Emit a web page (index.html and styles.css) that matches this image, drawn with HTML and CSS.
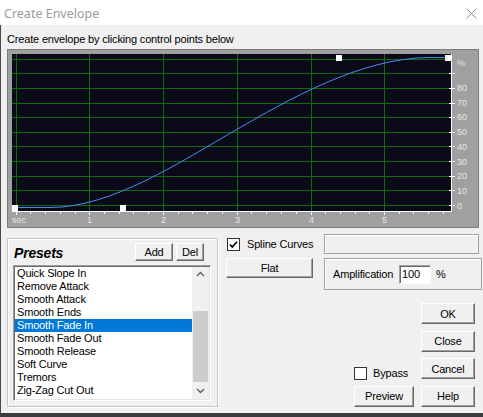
FILE: index.html
```html
<!DOCTYPE html>
<html>
<head>
<meta charset="utf-8">
<title>Create Envelope</title>
<link rel="stylesheet" href="styles.css">
</head>
<body>
<div class="window">
  <div class="titlebar">
    <span class="title">Create Envelope</span>
    <svg class="close" width="11" height="11" viewBox="0 0 11 11"><path d="M0.5 0.5 L10.5 10.5 M10.5 0.5 L0.5 10.5" stroke="#8c8c8c" stroke-width="1" fill="none"/></svg>
  </div>
  <div class="content">
    <div class="hint">Create envelope by clicking control points below</div>
    <div class="graph">
      <svg width="472" height="179" viewBox="7 49 472 179">
        <rect x="7.5" y="49.5" width="471" height="178" fill="#a0a0a0" stroke="#7c7c7c"/>
        <rect x="12" y="54" width="439" height="157" fill="#0a0a19"/>
        <g stroke="#0b6e0b" stroke-width="1" shape-rendering="crispEdges">
          <path d="M12 59.5H451M12 73.5H451M12 88.5H451M12 103.5H451M12 117.5H451M12 132.5H451M12 146.5H451M12 161.5H451M12 176.5H451M12 190.5H451M12 205.5H451"/>
          <path d="M16.5 54V211M89.5 54V211M163.5 54V211M237.5 54V211M311.5 54V211M384.5 54V211"/>
        </g>
        <g stroke="#ffffff" stroke-width="1" shape-rendering="crispEdges" fill="none">
          <path d="M12 211.5H452M451.5 54V212"/>
          <path d="M449 73.5H455M449 88.5H455M449 103.5H455M449 117.5H455M449 132.5H455M449 146.5H455M449 161.5H455M449 176.5H455M449 190.5H455M449 205.5H455"/>
          <path d="M16.5 212V215M30.5 212V214M45.5 212V214M60.5 212V214M75.5 212V214M89.5 212V215M104.5 212V214M119.5 212V214M133.5 212V214M148.5 212V214M163.5 212V215M178.5 212V214M192.5 212V214M207.5 212V214M222.5 212V214M237.5 212V215M251.5 212V214M266.5 212V214M281.5 212V214M296.5 212V214M311.5 212V215M325.5 212V214M340.5 212V214M355.5 212V214M369.5 212V214M384.5 212V215M399.5 212V214M413.5 212V214M428.5 212V214M443.5 212V214"/>
        </g>
        <g class="axis">
          <text x="457" y="66">%</text>
          <text x="457" y="91">80</text>
          <text x="457" y="105.5">70</text>
          <text x="457" y="120">60</text>
          <text x="457" y="135">50</text>
          <text x="457" y="149.5">40</text>
          <text x="457" y="164.5">30</text>
          <text x="457" y="179">20</text>
          <text x="457" y="194">10</text>
          <text x="457" y="208.5">0</text>
          <text x="12" y="222.5">sec</text>
          <text x="89.5" y="222.5" text-anchor="middle">1</text>
          <text x="163.5" y="222.5" text-anchor="middle">2</text>
          <text x="237.5" y="222.5" text-anchor="middle">3</text>
          <text x="311.5" y="222.5" text-anchor="middle">4</text>
          <text x="384.5" y="222.5" text-anchor="middle">5</text>
        </g>
        <path d="M12 207.5H50C112 207.5 180 162 237 129.3C285 101.8 360 57.5 430 57.5H451" stroke="#4d88f5" stroke-width="1" fill="none"/>
        <g fill="#ffffff" shape-rendering="crispEdges">
          <rect x="12" y="205" width="6" height="6"/>
          <rect x="120" y="205" width="6" height="6"/>
          <rect x="336" y="55" width="6" height="6"/>
          <rect x="445" y="55" width="6" height="6"/>
        </g>
      </svg>
    </div>
    <div class="lower">
      <div class="presets">
        <div class="presets-head">
          <span class="presets-title">Presets</span>
          <div class="head-buttons">
            <button class="btn btn-add">Add</button>
            <button class="btn btn-del">Del</button>
          </div>
        </div>
        <div class="listbox">
          <ul class="items">
            <li>Quick Slope In</li>
            <li>Remove Attack</li>
            <li>Smooth Attack</li>
            <li>Smooth Ends</li>
            <li class="selected">Smooth Fade In</li>
            <li>Smooth Fade Out</li>
            <li>Smooth Release</li>
            <li>Soft Curve</li>
            <li>Tremors</li>
            <li>Zig-Zag Cut Out</li>
          </ul>
          <div class="scrollbar">
            <div class="sb-btn sb-up"><svg width="9" height="6" viewBox="0 0 9 6"><path d="M1 5 L4.5 1.5 L8 5" stroke="#606060" stroke-width="1.4" fill="none"/></svg></div>
            <div class="sb-track-top"></div>
            <div class="sb-thumb"></div>
            <div class="sb-btn sb-down"><svg width="9" height="6" viewBox="0 0 9 6"><path d="M1 1 L4.5 4.5 L8 1" stroke="#606060" stroke-width="1.4" fill="none"/></svg></div>
          </div>
        </div>
      </div>
      <div class="controls">
        <div class="top-grid">
          <label class="check spline"><span class="cbox"><svg width="11" height="11" viewBox="0 0 11 11"><path d="M2 5.5 L4.3 8 L9 2.8" stroke="#000" stroke-width="1.7" fill="none"/></svg></span>Spline Curves</label>
          <div class="blank-box"></div>
          <button class="btn btn-flat">Flat</button>
          <div class="amp-box"><span class="amp-label">Amplification</span><span class="amp-input">100</span><span class="amp-unit">%</span></div>
        </div>
        <div class="bottom-row">
          <div class="left-col">
            <label class="check bypass"><span class="cbox"></span>Bypass</label>
            <button class="btn btn-side">Preview</button>
          </div>
          <div class="right-col">
            <button class="btn btn-side">OK</button>
            <button class="btn btn-side">Close</button>
            <button class="btn btn-side">Cancel</button>
            <button class="btn btn-side">Help</button>
          </div>
        </div>
      </div>
    </div>
  </div>
</div>
</body>
</html>
```
FILE: styles.css
```css
html, body {
  margin: 0;
  padding: 0;
}
body {
  width: 483px;
  height: 417px;
  overflow: hidden;
  background: #3a3c3f;
  font-family: "Liberation Sans", Arial, sans-serif;
  font-size: 11px;
  letter-spacing: -0.17px;
  color: #000;
}
.window {
  height: 413px;
  background: #f0f0f0;
  display: flex;
  flex-direction: column;
}
.titlebar {
  flex: none;
  height: 25px;
  box-sizing: border-box;
  background: #fff;
  display: flex;
  align-items: center;
  justify-content: space-between;
  padding: 1px 6px 0 4px;
}
.title {
  font-family: "Noto Sans", sans-serif;
  font-size: 12.5px;
  letter-spacing: 0;
  color: #9a9a9a;
}
.close {
  display: block;
}
.content {
  flex: 1;
  border-left: 1px solid #4a4a4a;
  padding-left: 6px;
}
.hint {
  margin-top: 8px;
  height: 13px;
  line-height: 13px;
  white-space: nowrap;
}
.graph {
  margin-top: 3px;
  width: 472px;
  height: 179px;
}
.graph svg {
  display: block;
}
.axis text {
  font-family: "Liberation Sans", Arial, sans-serif;
  font-size: 9px;
  letter-spacing: 0;
  fill: #e6e6e6;
}
.lower {
  display: flex;
  align-items: flex-start;
}
.presets {
  margin-top: 10px;
  width: 211px;
  height: 169px;
  box-sizing: border-box;
  border: 1px solid #c4c4c4;
  box-shadow: inset 1px 1px 0 #fff, 1px 1px 0 #fff;
  padding: 4px 6px 5px 5px;
}
.presets-head {
  display: flex;
  align-items: center;
  justify-content: space-between;
  height: 18px;
  padding-right: 7px;
}
.presets-title {
  font-weight: bold;
  font-style: italic;
  font-size: 14px;
  letter-spacing: -0.2px;
  margin-left: 1px;
  margin-top: 1px;
}
.head-buttons {
  display: flex;
  gap: 3px;
}
.btn {
  box-sizing: border-box;
  background: #f0f0f0;
  border: 1px solid;
  border-color: #fff #696969 #696969 #fff;
  box-shadow: inset -1px -1px 0 #a0a0a0;
  font-family: "Liberation Sans", Arial, sans-serif;
  font-size: 11px;
  letter-spacing: -0.17px;
  color: #000;
  padding: 0;
  margin: 0;
}
.btn-add {
  width: 38px;
  height: 18px;
}
.btn-del {
  width: 28px;
  height: 18px;
}
.listbox {
  margin-top: 4px;
  width: 198px;
  height: 136px;
  box-sizing: border-box;
  border: 1px solid;
  border-color: #a0a0a0 #fff #fff #a0a0a0;
  box-shadow: inset 1px 1px 0 #696969, inset -1px -1px 0 #e3e3e3;
  padding: 1px;
  background: #fff;
  display: flex;
}
.items {
  flex: 1;
  margin: 0;
  padding: 0;
  list-style: none;
}
.items li {
  height: 13px;
  line-height: 13px;
  padding-left: 2px;
  white-space: nowrap;
}
.items li.selected {
  background: #0078d7;
  color: #fff;
}
.scrollbar {
  width: 17px;
  background: #f0f0f0;
  display: flex;
  flex-direction: column;
}
.sb-btn {
  height: 17px;
  display: flex;
  justify-content: center;
}
.sb-up {
  align-items: flex-start;
}
.sb-up svg {
  margin-top: 4px;
}
.sb-down {
  align-items: center;
}
.sb-track-top {
  height: 27px;
}
.sb-thumb {
  height: 71px;
  margin: 0 1px;
  background: #cdcdcd;
}
.controls {
  margin-top: 6px;
  margin-left: 8px;
  width: 256px;
}
.top-grid {
  display: grid;
  grid-template-columns: 87px 158px;
  grid-template-rows: 20px 32px;
  column-gap: 11px;
  row-gap: 4px;
}
.check {
  display: flex;
  align-items: center;
  white-space: nowrap;
}
.cbox {
  flex: none;
  width: 13px;
  height: 13px;
  box-sizing: border-box;
  border: 1px solid #333;
  background: #fff;
  display: flex;
  align-items: center;
  justify-content: center;
}
.cbox svg {
  display: block;
}
.spline {
  padding-left: 1px;
}
.spline .cbox {
  margin-right: 7px;
}
.blank-box {
  width: 155px;
  box-sizing: border-box;
  border: 1px solid #a0a0a0;
  box-shadow: inset 1px 1px 0 #fff;
}
.btn-flat {
  width: 87px;
  height: 20px;
}
.amp-box {
  box-sizing: border-box;
  border: 1px solid #a0a0a0;
  box-shadow: inset 1px 1px 0 #fff;
  display: flex;
  align-items: center;
  padding-left: 8px;
  white-space: nowrap;
}
.amp-label {
  width: 66px;
}
.amp-input {
  width: 32px;
  height: 19px;
  box-sizing: border-box;
  background: #fff;
  border: 1px solid;
  border-color: #a0a0a0 #fff #fff #a0a0a0;
  box-shadow: inset 1px 1px 0 #696969;
  padding-left: 2px;
  line-height: 17px;
}
.amp-unit {
  margin-left: 5px;
}
.bottom-row {
  margin-top: 13px;
  display: flex;
  justify-content: flex-end;
  padding-right: 7px;
}
.left-col {
  width: 60px;
  margin-right: 7px;
  display: flex;
  flex-direction: column;
  justify-content: flex-end;
}
.bypass {
  margin-bottom: 6px;
}
.bypass .cbox {
  margin-right: 6px;
}
.right-col {
  width: 54px;
  display: flex;
  flex-direction: column;
  gap: 6.67px;
}
.btn-side {
  width: 100%;
  height: 21px;
}
```
